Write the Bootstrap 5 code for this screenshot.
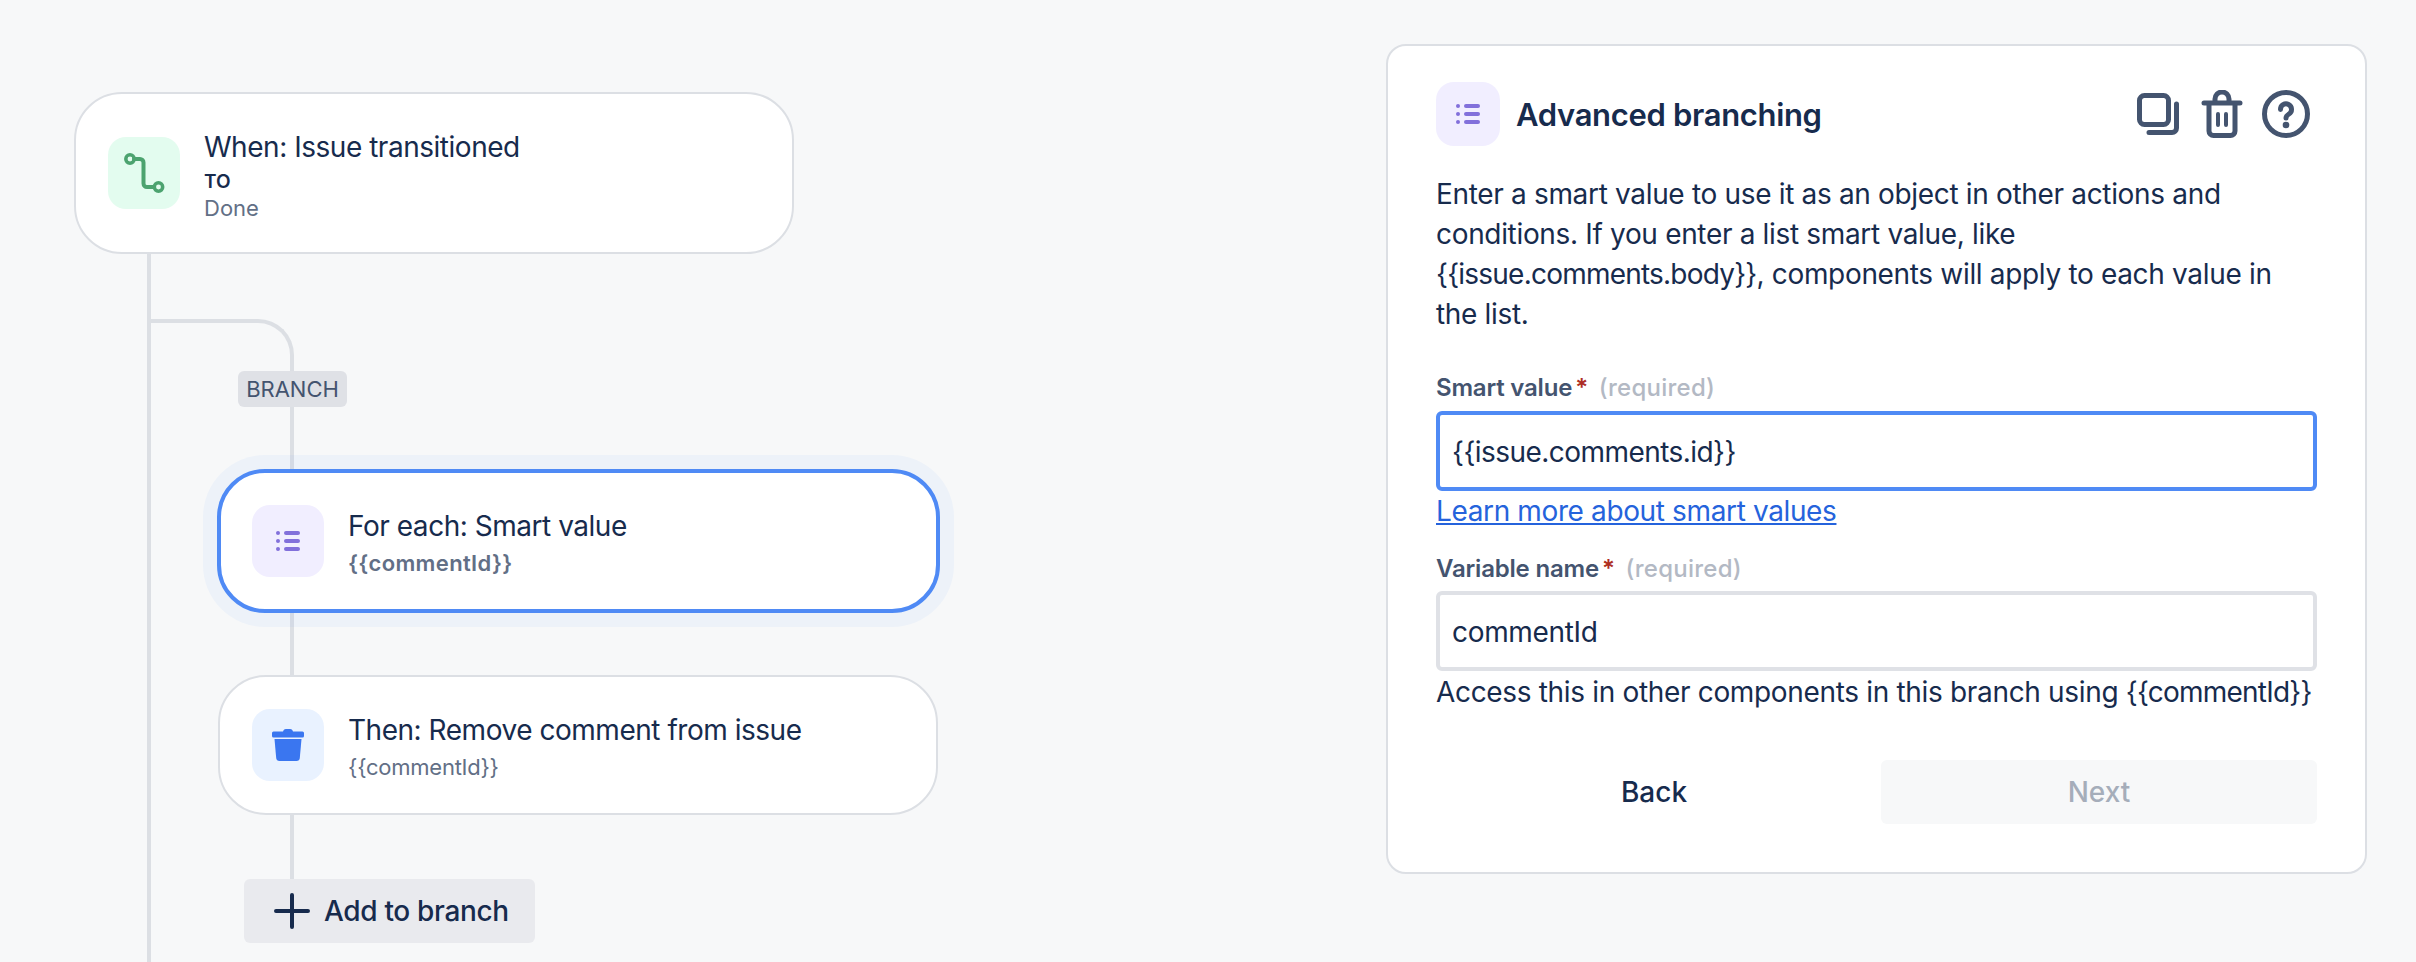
<!DOCTYPE html>
<html lang="en">
<head>
<meta charset="utf-8">
<title>Advanced branching</title>
<link href="https://cdn.jsdelivr.net/npm/bootstrap@5.3.0/dist/css/bootstrap.min.css" rel="stylesheet">
<style>
html,body{height:962px;overflow:hidden}
body{background:#F7F8F9;color:#172B4D;font-family:Inter,"Noto Sans",sans-serif;font-size:28px;line-height:40px;letter-spacing:-.33px}
.stage{height:962px}
.flow-col{width:1386px;flex:none;padding-top:92px;position:relative}
.trunk{position:absolute;left:147px;top:254px;bottom:0;width:4px;background:#DCDFE4}
.rule-card{background:#fff;border:2px solid #DCDFE4;border-radius:48px;display:flex;align-items:center;position:relative}
.rule-first{width:720px;margin-left:74px;height:162px;padding-left:32px}
.rule-sel{width:723px;margin-left:217px;height:144px;padding-left:31px;border:4px solid #4F8AF5;box-shadow:0 0 0 14px rgba(80,148,255,.06)}
.rule-next{width:720px;margin-left:218px;height:140px;padding-left:32px}
.tile{width:72px;height:72px;border-radius:18px;flex:none;display:flex;align-items:center;justify-content:center;margin-right:24px}
.tile-green{background:#E3FCEF}
.tile-purple{background:#F1EEFF}
.tile-blue{background:#E9F2FF}
.elbow{margin:65px 0 0 147px;width:147px;height:52px;border-top:4px solid #DCDFE4;border-right:4px solid #DCDFE4;border-top-right-radius:36px}
.branch-tag{margin-left:238px;width:109px;height:36px;background:#DFE1E6;border-radius:6px;color:#44546F;font-size:22px;line-height:36px;text-align:center;letter-spacing:0}
.stub{margin-left:290px;width:4px;background:#DCDFE4}
.rule-title{font-size:28px;line-height:36px;color:#172B4D;letter-spacing:-.47px;position:relative;top:1px}
.rule-sub{font-size:22px;line-height:28px;color:#626F86;letter-spacing:-.25px;position:relative;top:2px}
.rule-sub.fw-semibold{letter-spacing:.35px}
.rule-first .rule-title{top:3px}
.rule-to{font-size:19px;line-height:24px;font-weight:600;color:#172B4D;margin-top:6px;position:relative;top:2px;letter-spacing:0}
.rule-first .rule-sub{top:2px;letter-spacing:0}
.add-btn{margin-left:244px;width:291px;height:64px;background:#E9EAEE;border:0;border-radius:6px;color:#172B4D;font-size:28px;font-weight:500;line-height:40px;padding:0 0 0 30px;display:flex;align-items:center;gap:14px;letter-spacing:-.33px}
.add-btn:hover,.add-btn:active{background:#E9EAEE}
.side-panel{width:981px;height:830px;margin-top:44px;background:#fff;border:2px solid #DCDFE4;border-radius:20px;padding:36px 48px 0 48px;flex:none}
.tile-sm{width:64px;height:64px;border-radius:18px;margin-right:16px}
.panel-title{font-size:31px;line-height:40px;font-weight:600;color:#172B4D;margin:0;letter-spacing:-.33px;position:relative;top:1px}
.panel-text{margin:28px 0 38px}
.tight{letter-spacing:-.78px}
.fld-label{font-size:24px;line-height:32px;font-weight:600;color:#44546F;margin:0 0 7px;display:block;letter-spacing:-.2px}
.fld-label i{font-style:normal;color:#AE2E24;margin-left:3px}
.fld-label span{color:#B3B9C4;font-weight:500;margin-left:5px;letter-spacing:.25px}
.fld{height:80px;border:4px solid #DFE1E6;border-radius:6px;font-size:28px;line-height:40px;color:#172B4D;padding:2px 12px 0;background:#fff;box-shadow:none;font-family:inherit;letter-spacing:-.33px}
.fld-active,.fld-active:focus{border-color:#4F8AF5;box-shadow:none;letter-spacing:-.55px}
.fld-link{color:#2563DC;text-decoration:underline;display:block;line-height:40px;margin-bottom:21px;letter-spacing:-.37px}
.fld-link+.fld-label{position:relative;top:1px}
.fld-hint{line-height:40px;margin-bottom:49px;white-space:nowrap;position:relative;top:1px}
.act{width:436px;height:64px;border:0;border-radius:6px;font-size:28px;font-weight:500;line-height:40px;padding:0;font-family:inherit}
.act-back{background:#fff;color:#172B4D}
.act-next,.act-next:disabled{background:#F7F8F9;color:#A5ADBA;opacity:1}
.tools{gap:19px;margin-right:7px}
.tools svg:first-child{margin-right:3px}
</style>
</head>
<body>
<div class="stage d-flex">
  <div class="flow-col">
    <div class="trunk"></div>
    <div class="rule-card rule-first">
      <div class="tile tile-green">
        <svg width="72" height="72" viewBox="0 0 72 72" fill="none" stroke="#4CA36F" stroke-width="3.5" stroke-linecap="round"><circle cx="22" cy="22" r="4.2"/><circle cx="50.5" cy="50" r="4.2"/><path d="M26 22H32a3.500 3.500 0 0 1 3.500 3.500V46.500a3.500 3.500 0 0 0 3.500 3.500H46" stroke-width="4"/></svg>
      </div>
      <div>
        <div class="rule-title">When: Issue transitioned</div>
        <div class="rule-to">TO</div>
        <div class="rule-sub">Done</div>
      </div>
    </div>
    <div class="elbow"></div>
    <div class="branch-tag">BRANCH</div>
    <div class="stub" style="height:62px"></div>
    <div class="rule-card rule-sel">
      <div class="tile tile-purple">
        <svg width="24" height="24" viewBox="0 0 24 24" fill="#8270DB"><circle cx="2" cy="4" r="2"/><circle cx="2" cy="12" r="2"/><circle cx="2" cy="20" r="2"/><rect x="8" y="2" width="16" height="4" rx="2"/><rect x="8" y="10" width="16" height="4" rx="2"/><rect x="8" y="18" width="16" height="4" rx="2"/></svg>
      </div>
      <div>
        <div class="rule-title">For each: Smart value</div>
        <div class="rule-sub fw-semibold mt-1">{{commentId}}</div>
      </div>
    </div>
    <div class="stub" style="height:62px"></div>
    <div class="rule-card rule-next">
      <div class="tile tile-blue">
        <svg width="32" height="32" viewBox="0 0 32 32" fill="#3A76F0"><path d="M11 3.500Q11 0 14 0H18Q21 0 21 3.500Z"/><rect x="0" y="2.500" width="32" height="6" rx="1.500"/><path d="M2.500 10H29.500L27.800 29Q27.500 32 24.500 32H7.500Q4.500 32 4.200 29Z"/></svg>
      </div>
      <div>
        <div class="rule-title">Then: Remove comment from issue</div>
        <div class="rule-sub mt-1">{{commentId}}</div>
      </div>
    </div>
    <div class="stub" style="height:64px"></div>
    <button class="btn add-btn" type="button">
      <svg width="36" height="36" viewBox="0 0 36 36" fill="none" stroke="#172B4D" stroke-width="4" stroke-linecap="round"><path d="M18 2V34M2 18H34"/></svg>
      Add to branch
    </button>
  </div>
  <div class="side-panel">
    <div class="d-flex align-items-center">
      <div class="tile tile-purple tile-sm">
        <svg width="24" height="24" viewBox="0 0 24 24" fill="#8270DB"><circle cx="2" cy="4" r="2"/><circle cx="2" cy="12" r="2"/><circle cx="2" cy="20" r="2"/><rect x="8" y="2" width="16" height="4" rx="2"/><rect x="8" y="10" width="16" height="4" rx="2"/><rect x="8" y="18" width="16" height="4" rx="2"/></svg>
      </div>
      <h2 class="panel-title">Advanced branching</h2>
      <div class="ms-auto d-flex align-items-center tools">
        <svg width="42" height="42" viewBox="0 0 42 42" fill="none" stroke="#44546F" stroke-width="5" stroke-linecap="round"><rect x="2.500" y="2.500" width="29" height="29" rx="5"/><path d="M39.500 11V35a4.500 4.500 0 0 1-4.500 4.500H12"/></svg>
        <svg width="42" height="48" viewBox="0 0 42 48" fill="none" stroke="#44546F" stroke-width="5" stroke-linecap="round"><path d="M3 13H39M14 13V9a7 7 0 0 1 14 0V13M8 13V41a4.500 4.500 0 0 0 4.500 4.500H29.500A4.500 4.500 0 0 0 34 41V13"/><path d="M17 24V35M25 24V35" stroke-width="4"/></svg>
        <svg width="48" height="48" viewBox="0 0 48 48" fill="none" stroke="#44546F" stroke-width="5" stroke-linecap="round"><circle cx="24" cy="24" r="21.500"/><path d="M18.500 19.500a5.500 5.500 0 1 1 8.500 4.500c-2 1.300-3 2-3 4" stroke-width="5"/><circle cx="24" cy="35" r="3.300" fill="#44546F" stroke="none"/></svg>
      </div>
    </div>
    <div class="panel-text">
      <div>Enter a smart value to use it as an object in other actions and conditions. If you enter a list smart value, like</div>
      <div class="d-flex gap-2"><span class="tight">{{issue.comments.body}},</span><span>components will apply to each value in</span></div>
      <div>the list.</div>
    </div>
    <form>
      <label class="fld-label" for="fv">Smart value<i>*</i> <span>(required)</span></label>
      <input id="fv" class="form-control fld fld-active" type="text" value="{{issue.comments.id}}">
      <a class="fld-link" href="#">Learn more about smart values</a>
      <label class="fld-label" for="fn">Variable name<i>*</i> <span>(required)</span></label>
      <input id="fn" class="form-control fld" type="text" value="commentId">
      <div class="fld-hint">Access this in other components in this branch using <span class="tight">{{commentId}}</span></div>
      <div class="d-flex justify-content-between">
        <button class="btn act act-back" type="button">Back</button>
        <button class="btn act act-next" type="button" disabled>Next</button>
      </div>
    </form>
  </div>
</div>
<script src="https://cdn.jsdelivr.net/npm/bootstrap@5.3.0/dist/js/bootstrap.bundle.min.js"></script>
</body>
</html>
